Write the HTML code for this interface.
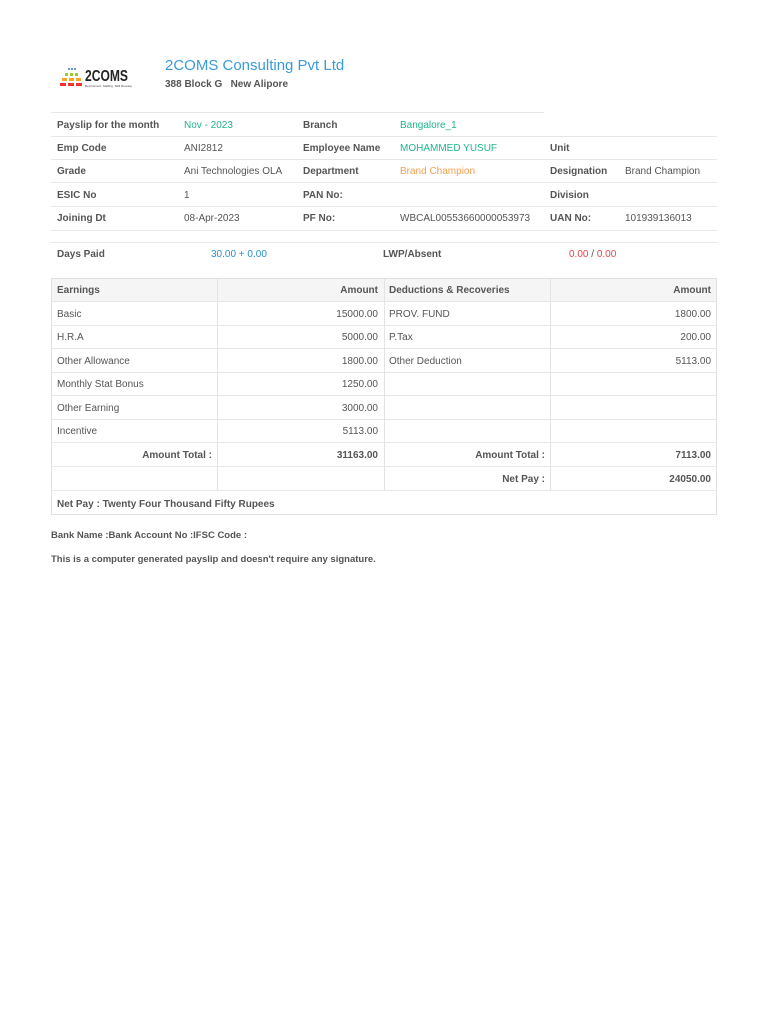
<!DOCTYPE html>
<html><head><meta charset="utf-8"><style>
body{margin:0;width:768px;height:1024px;background:#fff;font-family:"Liberation Sans",sans-serif;color:#555;font-size:10px;position:relative}
.a{position:absolute;white-space:nowrap;margin-top:2px}
.b{font-weight:bold;color:#555}
.hl{position:absolute;height:1px;background:#e6e6e6}
.vl{position:absolute;width:1px;background:#e3e3e3}
.g{color:#1fb58f}.o{color:#f0a050}.bl{color:#2a8fd0}.r{color:#e8454a}
.rt{text-align:right}
</style></head><body>
<svg class="a" style="left:58px;top:60px" width="74" height="30" viewBox="0 0 74 30">
<g fill="#e33"><rect x="2" y="21" width="6" height="3"/><rect x="10" y="21" width="6" height="3"/><rect x="18" y="21" width="6" height="3"/></g>
<g fill="#f5a623"><rect x="4" y="16" width="5" height="3"/><rect x="11" y="16" width="5" height="3"/><rect x="18" y="16" width="5" height="3"/></g>
<g fill="#9c3"><rect x="7" y="11" width="3" height="3"/><rect x="12" y="11" width="3" height="3"/><rect x="17" y="11" width="3" height="3"/></g>
<g fill="#69c"><rect x="10" y="6" width="2" height="2"/><rect x="13" y="6" width="2" height="2"/><rect x="16" y="6" width="2" height="2"/></g>
<text x="27" y="19" font-family="Liberation Sans" font-weight="bold" font-size="16" fill="#222" textLength="43" lengthAdjust="spacingAndGlyphs">2COMS</text>
<text x="27" y="25" font-size="3" fill="#444">Recruitment. Staffing. Skill Development</text>
</svg>
<div class="a" style="left:165px;top:55px;font-size:15px;color:#3a9ad9">2COMS Consulting Pvt Ltd</div>
<div class="a b" style="left:165px;top:77px;font-size:10px">388 Block G &nbsp; New Alipore</div>

<div class="hl" style="left:51px;top:112px;width:493px"></div>
<div class="hl" style="left:51px;top:136px;width:666px"></div>
<div class="hl" style="left:51px;top:159px;width:666px"></div>
<div class="hl" style="left:51px;top:182px;width:666px"></div>
<div class="hl" style="left:51px;top:206px;width:666px"></div>
<div class="hl" style="left:51px;top:230px;width:666px"></div>
<div class="hl" style="left:51px;top:242px;width:666px"></div>

<div class="a b" style="left:57px;top:118px">Payslip for the month</div><div class="a g" style="left:184px;top:118px">Nov - 2023</div><div class="a b" style="left:303px;top:118px">Branch</div><div class="a g" style="left:400px;top:118px">Bangalore_1</div>
<div class="a b" style="left:57px;top:141px">Emp Code</div><div class="a" style="left:184px;top:141px">ANI2812</div><div class="a b" style="left:303px;top:141px">Employee Name</div><div class="a g" style="left:400px;top:141px">MOHAMMED YUSUF</div><div class="a b" style="left:550px;top:141px">Unit</div>
<div class="a b" style="left:57px;top:164px">Grade</div><div class="a" style="left:184px;top:164px">Ani Technologies OLA</div><div class="a b" style="left:303px;top:164px">Department</div><div class="a o" style="left:400px;top:164px">Brand Champion</div><div class="a b" style="left:550px;top:164px">Designation</div><div class="a" style="left:625px;top:164px">Brand Champion</div>
<div class="a b" style="left:57px;top:188px">ESIC No</div><div class="a" style="left:184px;top:188px">1</div><div class="a b" style="left:303px;top:188px">PAN No:</div><div class="a b" style="left:550px;top:188px">Division</div>
<div class="a b" style="left:57px;top:211px">Joining Dt</div><div class="a" style="left:184px;top:211px">08-Apr-2023</div><div class="a b" style="left:303px;top:211px">PF No:</div><div class="a" style="left:400px;top:211px">WBCAL00553660000053973</div><div class="a b" style="left:550px;top:211px">UAN No:</div><div class="a" style="left:625px;top:211px">101939136013</div>

<div class="a b" style="left:57px;top:247px">Days Paid</div><div class="a bl" style="left:211px;top:247px">30.00 + 0.00</div><div class="a b" style="left:383px;top:247px">LWP/Absent</div><div class="a" style="left:569px;top:247px"><span class="r">0.00</span> / <span class="r">0.00</span></div>

<div class="a" style="left:51px;top:276px;width:665px;height:23px;background:#f5f5f5"></div>
<div class="a" style="left:51px;top:276px;width:666px;height:237px;border:1px solid #e0e0e0;box-sizing:border-box"></div>
<div class="hl" style="left:51px;top:301px;width:666px"></div>
<div class="hl" style="left:51px;top:325px;width:666px"></div>
<div class="hl" style="left:51px;top:348px;width:666px"></div>
<div class="hl" style="left:51px;top:372px;width:666px"></div>
<div class="hl" style="left:51px;top:395px;width:666px"></div>
<div class="hl" style="left:51px;top:419px;width:666px"></div>
<div class="hl" style="left:51px;top:442px;width:666px"></div>
<div class="hl" style="left:51px;top:466px;width:666px"></div>
<div class="hl" style="left:51px;top:490px;width:666px"></div>
<div class="vl" style="left:217px;top:278px;height:212px"></div>
<div class="vl" style="left:384px;top:278px;height:212px"></div>
<div class="vl" style="left:550px;top:278px;height:212px"></div>

<div class="a b" style="left:57px;top:283px">Earnings</div><div class="a b rt" style="left:220px;width:158px;top:283px">Amount</div><div class="a b" style="left:389px;top:283px">Deductions &amp; Recoveries</div><div class="a b rt" style="left:553px;width:158px;top:283px">Amount</div>
<div class="a" style="left:57px;top:307px">Basic</div><div class="a rt" style="left:220px;width:158px;top:307px">15000.00</div><div class="a" style="left:389px;top:307px">PROV. FUND</div><div class="a rt" style="left:553px;width:158px;top:307px">1800.00</div>
<div class="a" style="left:57px;top:330px">H.R.A</div><div class="a rt" style="left:220px;width:158px;top:330px">5000.00</div><div class="a" style="left:389px;top:330px">P.Tax</div><div class="a rt" style="left:553px;width:158px;top:330px">200.00</div>
<div class="a" style="left:57px;top:354px">Other Allowance</div><div class="a rt" style="left:220px;width:158px;top:354px">1800.00</div><div class="a" style="left:389px;top:354px">Other Deduction</div><div class="a rt" style="left:553px;width:158px;top:354px">5113.00</div>
<div class="a" style="left:57px;top:377px">Monthly Stat Bonus</div><div class="a rt" style="left:220px;width:158px;top:377px">1250.00</div>
<div class="a" style="left:57px;top:401px">Other Earning</div><div class="a rt" style="left:220px;width:158px;top:401px">3000.00</div>
<div class="a" style="left:57px;top:424px">Incentive</div><div class="a rt" style="left:220px;width:158px;top:424px">5113.00</div>
<div class="a b rt" style="left:55px;width:157px;top:448px">Amount Total :</div><div class="a b rt" style="left:220px;width:158px;top:448px">31163.00</div><div class="a b rt" style="left:389px;width:156px;top:448px">Amount Total :</div><div class="a b rt" style="left:553px;width:158px;top:448px">7113.00</div>
<div class="a b rt" style="left:389px;width:156px;top:472px">Net Pay :</div><div class="a b rt" style="left:553px;width:158px;top:472px">24050.00</div>
<div class="a b" style="left:57px;top:497px">Net Pay : Twenty Four Thousand Fifty Rupees</div>

<div class="a b" style="left:51px;top:528px;font-size:9.5px">Bank Name :Bank Account No :IFSC Code :</div>
<div class="a b" style="left:51px;top:552px;font-size:9.5px">This is a computer generated payslip and doesn't require any signature.</div>
</body></html>
